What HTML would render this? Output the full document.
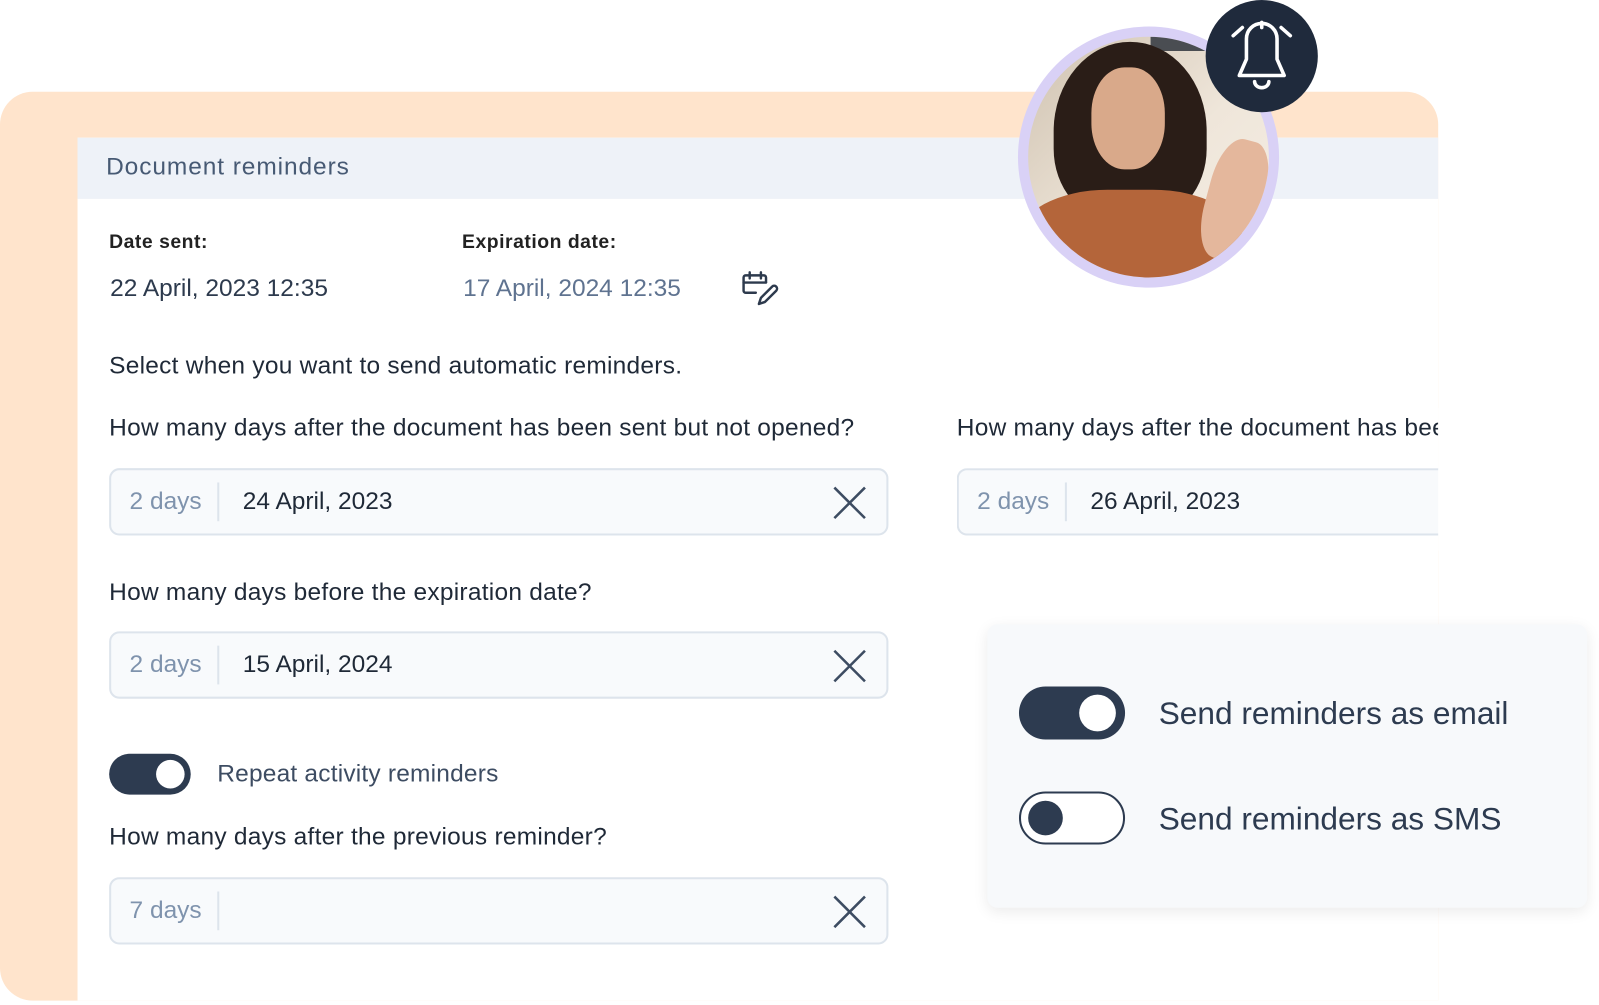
<!DOCTYPE html>
<html><head><meta charset="utf-8"><style>
*{margin:0;padding:0;box-sizing:border-box}
body{width:1599px;height:1001px;background:#fff;position:relative;overflow:hidden;font-family:"Liberation Sans",sans-serif;color:#1f2937}
#w{position:absolute;left:0;top:0;width:1570px;height:985px;transform:scale(1.02);transform-origin:0 0}
.abs{position:absolute}
.orange{left:0;top:90px;width:1410px;height:891px;background:#ffe4cc;border-radius:32px 32px 0 32px}
.panel{left:76px;top:135px;width:1334px;height:846px;background:#fff}
.head{left:76px;top:135px;width:1334px;height:60px;background:#eef2f8}
.t{position:absolute;white-space:nowrap}
.q{font-size:24px;letter-spacing:0.25px;color:#1f2937}
.input{position:absolute;height:66px;border:2px solid #dde4ec;border-radius:10px;background:#f8fafc}
.days{position:absolute;left:18px;top:17px;font-size:24px;color:#7f93ad}
.sep{position:absolute;left:104px;top:12px;width:2px;height:38px;background:#dde4ec}
.val{position:absolute;left:129px;top:17px;font-size:24px;color:#1f2937}
.x{position:absolute;right:19px;top:15px}
</style></head><body><div id="w">
<div class="abs orange"></div>
<div class="abs panel"></div>
<div class="abs head"></div>
<div class="t" style="left:104px;top:150px;font-size:24px;letter-spacing:0.9px;color:#475a74">Document reminders</div>
<div class="t" style="left:107px;top:227px;font-size:19px;font-weight:bold;letter-spacing:0.5px;color:#222">Date sent:</div>
<div class="t" style="left:453px;top:227px;font-size:19px;font-weight:bold;letter-spacing:0.5px;color:#222">Expiration date:</div>
<div class="t" style="left:108px;top:269px;font-size:24px;color:#2d3a4d">22 April, 2023 12:35</div>
<div class="t" style="left:454px;top:269px;font-size:24px;color:#5f7390">17 April, 2024 12:35</div>
<svg class="abs" style="left:725px;top:265px" width="40" height="38" viewBox="0 0 40 38" fill="none" stroke="#2d3a4d" stroke-width="2.4" stroke-linecap="round" stroke-linejoin="round">
<path d="M16 22H6a2 2 0 0 1-2-2V7a2 2 0 0 1 2-2h18a2 2 0 0 1 2 2v5"/><path d="M4 12h22"/><path d="M10 2v6M21 2v6"/>
<path d="M19 33l2-6 11-11a2.5 2.5 0 0 1 4 4L25 31z"/></svg>
<div class="t q" style="left:107px;top:345px">Select when you want to send automatic reminders.</div>
<div class="t q" style="left:107px;top:406px">How many days after the document has been sent but not opened?</div>
<div style="position:absolute;left:938px;top:406px;width:472px;height:30px;overflow:hidden"><div class="t q" style="left:0;top:0">How many days after the document has been opened?</div></div>
<div class="input" style="left:107px;top:459px;width:764px"><div class="days">2 days</div><div class="sep"></div><div class="val">24 April, 2023</div>
<svg class="x" width="34" height="34" viewBox="0 0 34 34" stroke="#3d4c62" stroke-width="2.5"><path d="M2 2L32 32M32 2L2 32"/></svg></div>
<div class="input" style="left:938px;top:459px;width:490px;border-right:none"><div class="days">2 days</div><div class="sep"></div><div class="val">26 April, 2023</div></div>
<div class="abs" style="left:1410px;top:400px;width:189px;height:140px;background:#fff"></div>
<div class="t q" style="left:107px;top:567px">How many days before the expiration date?</div>
<div class="input" style="left:107px;top:619px;width:764px"><div class="days">2 days</div><div class="sep"></div><div class="val">15 April, 2024</div>
<svg class="x" width="34" height="34" viewBox="0 0 34 34" stroke="#3d4c62" stroke-width="2.5"><path d="M2 2L32 32M32 2L2 32"/></svg></div>
<div class="abs" style="left:107px;top:739px;width:80px;height:40px;border-radius:20px;background:#2d3b50"><div class="abs" style="left:46px;top:6px;width:28px;height:28px;border-radius:50%;background:#fff"></div></div>
<div class="t" style="left:213px;top:745px;font-size:24px;letter-spacing:0.2px;color:#3d4c62">Repeat activity reminders</div>
<div class="t q" style="left:107px;top:807px">How many days after the previous reminder?</div>
<div class="input" style="left:107px;top:860px;width:764px"><div class="days">7 days</div><div class="sep"></div>
<svg class="x" width="34" height="34" viewBox="0 0 34 34" stroke="#3d4c62" stroke-width="2.5"><path d="M2 2L32 32M32 2L2 32"/></svg></div>

<div class="abs" style="left:968px;top:612px;width:588px;height:278px;background:#f7f9fb;border-radius:10px;box-shadow:0 4px 14px rgba(0,0,0,0.08)"></div>
<div class="abs" style="left:999px;top:673px;width:104px;height:52px;border-radius:26px;background:#2d3b50"><div class="abs" style="left:59px;top:8px;width:36px;height:36px;border-radius:50%;background:#fff"></div></div>
<div class="t" style="left:1136px;top:682px;font-size:31px;color:#2d3b50">Send reminders as email</div>
<div class="abs" style="left:999px;top:776px;width:104px;height:52px;border-radius:26px;border:2px solid #2d3b50;background:#fff"><div class="abs" style="left:7px;top:7px;width:34px;height:34px;border-radius:50%;background:#2d3b50"></div></div>
<div class="t" style="left:1136px;top:785px;font-size:31px;color:#2d3b50">Send reminders as SMS</div>

<div class="abs" style="left:998px;top:26px;width:256px;height:256px;border-radius:50%;background:#d9d1f6"></div>
<div class="abs" style="left:1008px;top:36px;width:236px;height:236px;border-radius:50%;overflow:hidden;background:linear-gradient(135deg,#cfc2b0,#efe6da 55%,#f5eee4)">
<div class="abs" style="left:120px;top:0;width:140px;height:14px;background:#4a4d52"></div>
<div class="abs" style="left:25px;top:5px;width:150px;height:175px;border-radius:50% 50% 40% 40%;background:#2a1d17"></div>
<div class="abs" style="left:62px;top:30px;width:72px;height:100px;border-radius:45%;background:#d9a98a"></div>
<div class="abs" style="left:-10px;top:150px;width:220px;height:120px;border-radius:40% 40% 0 0;background:#b4653a"></div>
<div class="abs" style="left:175px;top:100px;width:55px;height:120px;border-radius:40%;background:#e4b79c;transform:rotate(15deg)"></div>
</div>
<div class="abs" style="left:1182px;top:0;width:110px;height:110px;border-radius:50%;background:#1f2a3c"></div>
<svg class="abs" style="left:1182px;top:0" width="110" height="110" viewBox="0 0 110 110" fill="none" stroke="#fff" stroke-width="3.5" stroke-linecap="round" stroke-linejoin="round">
<path d="M55 22v5"/><path d="M40 38a15 15 0 0 1 30 0v20l7 16H33l7-16z"/><path d="M48 80a7 6 0 0 0 14 0"/>
<path d="M27 35l9-8M83 35l-9-8"/></svg>
</div></body></html>
